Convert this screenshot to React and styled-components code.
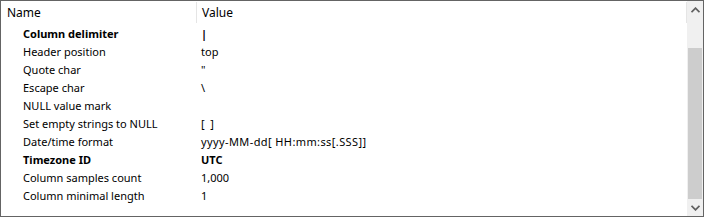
import styled, { createGlobalStyle } from "styled-components";

const GlobalStyle = createGlobalStyle`
  html, body { margin: 0; padding: 0; background: #fff; }
  body { font-family: "Noto Sans", "Open Sans", "Liberation Sans", sans-serif; font-size: 11px; color: #000; }
`;

const rows = [
  { name: "Column delimiter", value: "|", bold: true },
  { name: "Header position", value: "top" },
  { name: "Quote char", value: "\"" },
  { name: "Escape char", value: "\\" },
  { name: "NULL value mark", value: "" },
  { name: "Set empty strings to NULL", value: "[  ]" },
  { name: "Date/time format", value: "yyyy-MM-dd[ HH:mm:ss[.SSS]]" },
  { name: "Timezone ID", value: "UTC", bold: true },
  { name: "Column samples count", value: "1,000" },
  { name: "Column minimal length", value: "1" },
];

function Chevron({ down }) {
  return (
    <svg width="9" height="6" viewBox="0 0 9 6">
      <path
        d={down ? "M0.5 0.8 L4.5 4.8 L8.5 0.8" : "M0.5 5.2 L4.5 1.2 L8.5 5.2"}
        fill="none"
        stroke="#606060"
        strokeWidth="1.8"
      />
    </svg>
  );
}

export default function App() {
  return (
    <>
      <GlobalStyle />
      <Frame>
        <Main>
          <Header>
            <HeadCell $width={196}>Name</HeadCell>
            <HeadCell $grow>Value</HeadCell>
          </Header>
          {rows.map((r) => (
            <Row key={r.name} $bold={r.bold}>
              <NameCell>{r.name}</NameCell>
              <ValueCell $wide={r.name === "Date/time format"}>{r.value}</ValueCell>
            </Row>
          ))}
        </Main>
        <Scrollbar>
          <ArrowBtn><Chevron /></ArrowBtn>
          <Track>
            <Thumb />
          </Track>
          <ArrowBtn><Chevron down /></ArrowBtn>
        </Scrollbar>
      </Frame>
    </>
  );
}

const Frame = styled.div`
  box-sizing: border-box;
  width: 704px;
  height: 217px;
  border: 1px solid #646464;
  display: flex;
  overflow: hidden;
`;

const Main = styled.div`
  flex: 1;
  display: flex;
  flex-direction: column;
`;

const Header = styled.div`
  display: flex;
  height: 23px;
  align-items: stretch;
`;

const HeadCell = styled.div`
  box-sizing: border-box;
  ${(p) => (p.$grow ? "flex: 1;" : `width: ${p.$width}px;`)}
  display: flex;
  align-items: center;
  border-right: 1px solid #e5e5e5;
  margin-top: 1px;
  margin-bottom: 1px;
  font-size: 12px;
  &:first-child { padding-left: 6px; }
  &:last-child { padding-left: 5px; }
`;

const Row = styled.div`
  display: flex;
  height: 18px;
  align-items: center;
  font-weight: ${(p) => (p.$bold ? 700 : 400)};
`;

const NameCell = styled.div`
  width: 200px;
  box-sizing: border-box;
  padding-left: 22px;
  white-space: nowrap;
`;

const ValueCell = styled.div`
  flex: 1;
  white-space: pre;
  letter-spacing: ${(p) => (p.$wide ? "0.4px" : "0")};
`;

const Scrollbar = styled.div`
  width: 16px;
  background: #f0f0f0;
  display: flex;
  flex-direction: column;
`;

const ArrowBtn = styled.div`
  height: 17px;
  display: flex;
  align-items: center;
  justify-content: center;
`;

const Track = styled.div`
  flex: 1;
  display: flex;
  flex-direction: column;
  justify-content: flex-end;
`;

const Thumb = styled.div`
  height: 151px;
  margin: 0 1px;
  background: #cdcdcd;
`;
